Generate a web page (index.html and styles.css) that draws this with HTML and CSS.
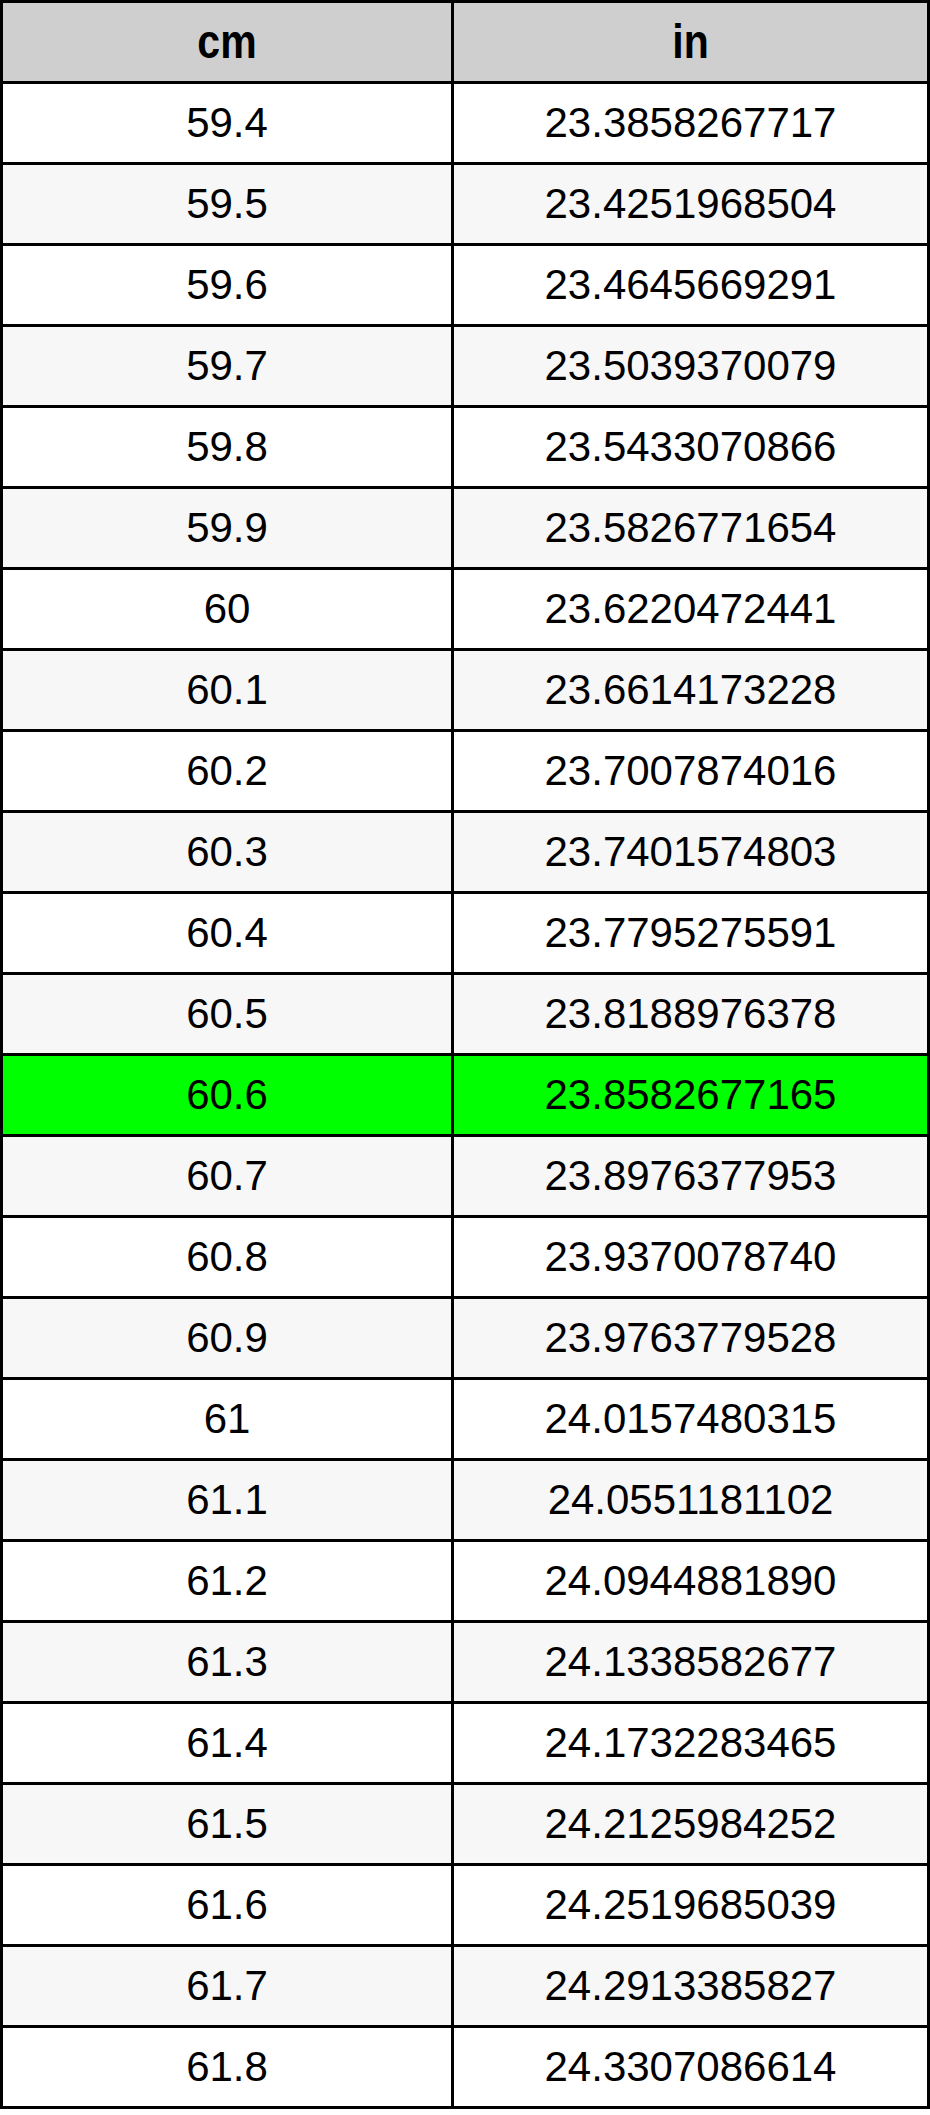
FILE: index.html
```html
<!DOCTYPE html>
<html>
<head>
<meta charset="utf-8">
<link rel="stylesheet" href="styles.css">
</head>
<body>
<table class="conv">
<thead>
<tr><th class="c1"><span class="hd">cm</span></th><th class="c2"><span class="hd">in</span></th></tr>
</thead>
<tbody>
<tr><td>59.4</td><td>23.3858267717</td></tr>
<tr><td>59.5</td><td>23.4251968504</td></tr>
<tr><td>59.6</td><td>23.4645669291</td></tr>
<tr><td>59.7</td><td>23.5039370079</td></tr>
<tr><td>59.8</td><td>23.5433070866</td></tr>
<tr><td>59.9</td><td>23.5826771654</td></tr>
<tr><td>60</td><td>23.6220472441</td></tr>
<tr><td>60.1</td><td>23.6614173228</td></tr>
<tr><td>60.2</td><td>23.7007874016</td></tr>
<tr><td>60.3</td><td>23.7401574803</td></tr>
<tr><td>60.4</td><td>23.7795275591</td></tr>
<tr><td>60.5</td><td>23.8188976378</td></tr>
<tr class="hl"><td>60.6</td><td>23.8582677165</td></tr>
<tr><td>60.7</td><td>23.8976377953</td></tr>
<tr><td>60.8</td><td>23.9370078740</td></tr>
<tr><td>60.9</td><td>23.9763779528</td></tr>
<tr><td>61</td><td>24.0157480315</td></tr>
<tr><td>61.1</td><td>24.0551181102</td></tr>
<tr><td>61.2</td><td>24.0944881890</td></tr>
<tr><td>61.3</td><td>24.1338582677</td></tr>
<tr><td>61.4</td><td>24.1732283465</td></tr>
<tr><td>61.5</td><td>24.2125984252</td></tr>
<tr><td>61.6</td><td>24.2519685039</td></tr>
<tr><td>61.7</td><td>24.2913385827</td></tr>
<tr><td>61.8</td><td>24.3307086614</td></tr>
</tbody>
</table>
</body>
</html>
```
FILE: styles.css
```css
html, body {
  margin: 0;
  padding: 0;
  background: #ffffff;
}
.conv {
  width: 930px;
  border-collapse: separate;
  border-spacing: 3px;
  background: #000000;
  table-layout: fixed;
  font-family: "Liberation Sans", Arial, sans-serif;
  color: #000000;
}
.conv th, .conv td {
  height: 78px;
  padding: 0;
  text-align: center;
  vertical-align: middle;
}
.conv th {
  background: #cfcfcf;
  font-weight: bold;
  font-size: 41px;
}
.conv .hd {
  display: inline-block;
  transform: scaleY(1.18);
}
.conv .c1 { width: 448px; }
.conv .c2 { width: 473px; }
.conv td {
  font-size: 42px;
  background: #ffffff;
}
.conv tbody tr:nth-child(even) td {
  background: #f7f7f7;
}
.conv tbody tr.hl td {
  background: #00ff00;
}
```
